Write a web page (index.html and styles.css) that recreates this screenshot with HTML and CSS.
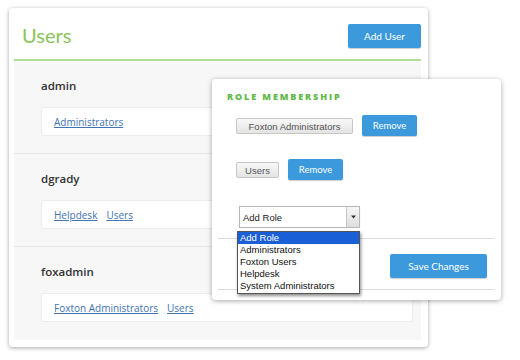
FILE: index.html
```html
<!DOCTYPE html>
<html>
<head>
<meta charset="utf-8">
<link rel="stylesheet" href="styles.css">
</head>
<body>
<div class="stage">
  <div class="card">
    <div class="card-header">
      <h1 class="title">Users</h1>
      <button class="btn btn-add">Add User</button>
    </div>
    <div class="card-body">
      <div class="user">
        <div class="user-name">admin</div>
        <div class="roles"><a class="role-link" href="#">Administrators</a></div>
      </div>
      <div class="user">
        <div class="user-name">dgrady</div>
        <div class="roles"><a class="role-link" href="#">Helpdesk</a><a class="role-link" href="#">Users</a></div>
      </div>
      <div class="user">
        <div class="user-name">foxadmin</div>
        <div class="roles"><a class="role-link" href="#">Foxton Administrators</a><a class="role-link" href="#">Users</a></div>
      </div>
    </div>
  </div>

  <div class="popup">
    <div class="popup-body">
      <div class="popup-title">ROLE MEMBERSHIP</div>
      <div class="member-row row-one">
        <span class="tag tag-long">Foxton Administrators</span>
        <button class="btn btn-remove">Remove</button>
      </div>
      <div class="member-row row-two">
        <span class="tag tag-short">Users</span>
        <button class="btn btn-remove">Remove</button>
      </div>
      <div class="select-wrap">
        <div class="select">
          <span class="select-value">Add Role</span>
          <span class="select-arrow">
            <svg width="5" height="4" viewBox="0 0 5 4"><path d="M0 0.5h5L2.5 3.5z" fill="#333"/></svg>
          </span>
        </div>
        <ul class="dropdown">
          <li class="option active">Add Role</li>
          <li class="option">Administrators</li>
          <li class="option">Foxton Users</li>
          <li class="option">Helpdesk</li>
          <li class="option">System Administrators</li>
        </ul>
      </div>
    </div>
    <div class="popup-footer">
      <button class="btn btn-save">Save Changes</button>
    </div>
  </div>
</div>
</body>
</html>
```

FILE: styles.css
```css
* { box-sizing: border-box; }

html, body {
  margin: 0;
  padding: 0;
  background: #ffffff;
}

body {
  font-family: "Open Sans", "Liberation Sans", sans-serif;
  color: #333;
}

.stage {
  position: relative;
  width: 520px;
  height: 360px;
  overflow: hidden;
  padding-top: 8px;
  padding-left: 9px;
}

.card {
  width: 419px;
  height: 339px;
  background: #fff;
  border-radius: 4px;
  box-shadow: 0 1px 4px rgba(0, 0, 0, 0.35);
  padding: 0 7px 7px 5px;
  display: flex;
  flex-direction: column;
}

.card-header {
  height: 53px;
  border-bottom: 2px solid #b3dc97;
  display: flex;
  justify-content: space-between;
  align-items: flex-start;
  padding: 16px 0 0 8px;
}

.title {
  margin: -1px 0 0 0;
  font-family: "Lato", "Open Sans", sans-serif;
  font-weight: 400;
  font-size: 20px;
  line-height: 24px;
  color: #8cc35a;
}

.btn {
  border: none;
  border-radius: 2px;
  background: #3b99dc;
  color: #fff;
  font-family: "Lato", "Open Sans", sans-serif;
  padding: 0;
  cursor: pointer;
  box-shadow: 0 1px 1px rgba(0, 0, 0, 0.2);
}

.btn-add {
  width: 73px;
  height: 24px;
  font-size: 10px;
}

.card-body {
  flex: 1;
  background: #f7f7f7;
  display: flex;
  flex-direction: column;
}

.user {
  padding: 17px 8px 17px 27px;
  border-bottom: 1px solid #e6e6e6;
}

.user:last-child {
  border-bottom: none;
}

.user-name {
  font-size: 11.5px;
  font-weight: 600;
  line-height: 16px;
  color: #333;
  margin-bottom: 13px;
}

.roles {
  height: 29px;
  background: #fff;
  border: 1px solid #ececec;
  border-radius: 3px;
  display: flex;
  align-items: center;
  padding-left: 12px;
  gap: 9px;
}

.role-link {
  font-size: 10px;
  color: #4273b3;
  text-decoration: underline;
}

/* Popup */
.popup {
  position: absolute;
  left: 212px;
  top: 79px;
  width: 289px;
  height: 221px;
  background: #fff;
  border-radius: 4px;
  box-shadow: 0 1px 5px rgba(0, 0, 0, 0.35);
  padding: 0 6px;
}

.popup-body {
  border-bottom: 1px solid #dcdcdc;
  padding: 12px 0 10px 9px;
  height: 160px;
}

.popup-title {
  font-size: 9px;
  font-weight: 800;
  letter-spacing: 1.9px;
  line-height: 12px;
  color: #62b948;
}

.member-row {
  display: flex;
  align-items: center;
  gap: 9px;
  margin-left: 9px;
  height: 21px;
}

.row-one { margin-top: 12px; }
.row-two { margin-top: 23px; }

.tag {
  height: 16px;
  display: inline-flex;
  align-items: center;
  justify-content: center;
  font-family: "Liberation Sans", Arial, sans-serif;
  font-size: 9.5px;
  color: #555;
  border: 1px solid #c6c6c6;
  border-radius: 2px;
  background: linear-gradient(#f8f8f8, #e4e4e4);
  margin-top: 1px;
}

.tag-long { width: 117px; }
.tag-short { width: 43px; }

.btn-remove {
  width: 55px;
  height: 21px;
  font-size: 9.5px;
}

.select-wrap {
  position: relative;
  margin-top: 26px;
  margin-left: 12px;
  width: 121px;
}

.select {
  height: 22px;
  border: 1px solid #b8b8b8;
  background: #fff;
  display: flex;
  align-items: stretch;
  box-shadow: 0 0 1px rgba(0,0,0,0.1);
}

.select-value {
  flex: 1;
  display: flex;
  align-items: center;
  padding-left: 3px;
  font-family: "Liberation Sans", Arial, sans-serif;
  font-size: 9.5px;
  color: #222;
}

.select-arrow {
  width: 13px;
  border-left: 1px solid #c4c4c4;
  background: linear-gradient(#f6f6f6, #dedede);
  display: flex;
  align-items: center;
  justify-content: center;
}

.dropdown {
  position: absolute;
  left: -2px;
  top: 25px;
  width: 123px;
  margin: 0;
  padding: 0 0 1px 0;
  list-style: none;
  background: #fff;
  border: 1px solid #555;
  box-shadow: 1px 2px 3px rgba(0, 0, 0, 0.45);
  z-index: 2;
}

.option {
  height: 12px;
  line-height: 12px;
  padding-left: 2px;
  font-family: "Liberation Sans", Arial, sans-serif;
  font-size: 9.5px;
  color: #111;
  white-space: nowrap;
}

.option.active {
  background: #1b5fd6;
  color: #fff;
}

.popup-footer {
  height: 51px;
  border-bottom: 1px solid #dcdcdc;
  display: flex;
  justify-content: flex-end;
  align-items: flex-start;
  padding: 15px 8px 0 0;
}

.btn-save {
  width: 97px;
  height: 24px;
  font-size: 10px;
}
```
